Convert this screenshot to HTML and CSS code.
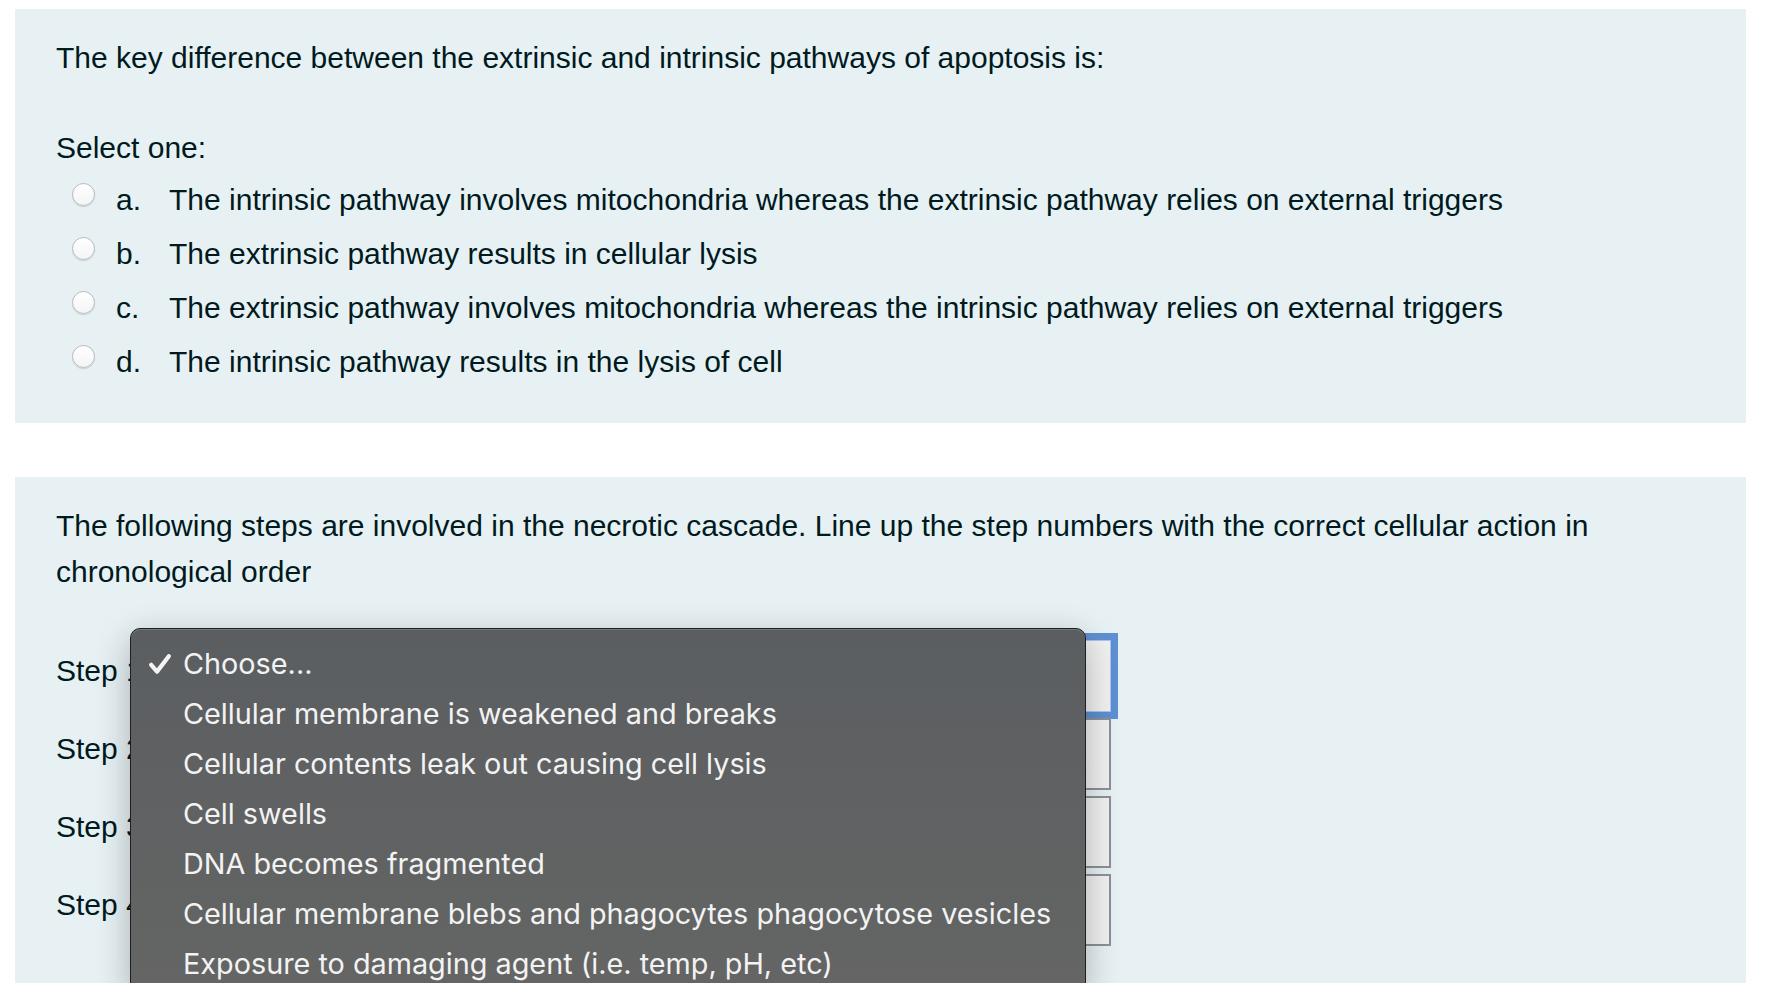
FILE: index.html
```html
<!DOCTYPE html>
<html>
<head>
    <title>Quiz</title>
    <link rel="stylesheet" href="styles.css">
</head>
<body>
    <div class="page">
        <div class="que">
            <div class="qtext">The key difference between the extrinsic and intrinsic pathways of apoptosis is:</div>
            <div class="prompt">Select one:</div>
            <div class="answer">
                <label class="option"><input type="radio" class="radio" name="q1"><span class="num">a.</span><span>The intrinsic pathway involves mitochondria whereas the extrinsic pathway relies on external triggers</span></label>
                <label class="option"><input type="radio" class="radio" name="q1"><span class="num">b.</span><span>The extrinsic pathway results in cellular lysis</span></label>
                <label class="option"><input type="radio" class="radio" name="q1"><span class="num">c.</span><span>The extrinsic pathway involves mitochondria whereas the intrinsic pathway relies on external triggers</span></label>
                <label class="option"><input type="radio" class="radio" name="q1"><span class="num">d.</span><span>The intrinsic pathway results in the lysis of cell</span></label>
            </div>
        </div>

        <div class="que">
            <div class="qtext">The following steps are involved in the necrotic cascade. Line up the step numbers with the correct cellular action in chronological order</div>
            <div class="steps">
                <div class="step-row">
                    <span class="step-label">Step 1</span>
                    <select class="step-select focused"><option>Choose...</option></select>
                </div>
                <div class="step-row">
                    <span class="step-label">Step 2</span>
                    <select class="step-select"><option>Choose...</option></select>
                </div>
                <div class="step-row">
                    <span class="step-label">Step 3</span>
                    <select class="step-select"><option>Choose...</option></select>
                </div>
                <div class="step-row">
                    <span class="step-label">Step 4</span>
                    <select class="step-select"><option>Choose...</option></select>
                </div>

                <ul class="popup-menu">
                    <li class="menu-item">
                        <span class="check-slot">
                            <svg class="check" width="22" height="20" viewBox="0 0 22 20"><path d="M2.2 10.8 L8 17.6 L19.8 2.2" fill="none" stroke="#f4f4f4" stroke-width="4.2" stroke-linecap="round" stroke-linejoin="round"/></svg>
                        </span>Choose...
                    </li>
                    <li class="menu-item"><span class="check-slot"></span>Cellular membrane is weakened and breaks</li>
                    <li class="menu-item"><span class="check-slot"></span>Cellular contents leak out causing cell lysis</li>
                    <li class="menu-item"><span class="check-slot"></span>Cell swells</li>
                    <li class="menu-item"><span class="check-slot"></span>DNA becomes fragmented</li>
                    <li class="menu-item"><span class="check-slot"></span>Cellular membrane blebs and phagocytes phagocytose vesicles</li>
                    <li class="menu-item"><span class="check-slot"></span>Exposure to damaging agent (i.e. temp, pH, etc)</li>
                </ul>
            </div>
        </div>
    </div>
</body>
</html>
```

FILE: styles.css
```css
body {
    margin: 0;
    font-family: "Liberation Sans", Arial, sans-serif;
    color: #001a1e;
    background-color: #fff;
    overflow: hidden;
}

.page {
    padding: 9px 0 0 15px;
    width: 1731px;
}

.que {
    background-color: #e7f1f4;
    padding: 27px 41px 34px;
    font-size: 30px;
    line-height: 42px;
}

.que + .que {
    margin-top: 54px;
    padding-bottom: 37px;
}

.qtext {
    margin-top: -1px;
    line-height: 46px;
}

.prompt {
    margin-top: 46px;
}

.answer {
    margin-top: 4px;
}

.option {
    display: flex;
    align-items: flex-start;
    height: 54px;
    line-height: 54px;
}

.radio {
    appearance: none;
    -webkit-appearance: none;
    flex: none;
    width: 23px;
    height: 23px;
    margin: 10px 0 0 16px;
    border: 1px solid #b7babd;
    border-radius: 50%;
    background: linear-gradient(#ffffff, #f4f4f4);
    box-shadow: 0 1px 1px rgba(0, 0, 0, 0.12);
    box-sizing: border-box;
}

.num {
    width: 53px;
    margin-left: 21px;
    flex: none;
}

.steps {
    position: relative;
    margin-top: 45px;
}

.step-row {
    display: flex;
    align-items: flex-start;
    height: 72px;
    margin-bottom: 6px;
}

.step-row:last-of-type {
    margin-bottom: 0;
}

.step-label {
    padding-top: 10px;
    width: 89px;
    flex: none;
}

.step-select {
    appearance: none;
    -webkit-appearance: none;
    width: 966px;
    height: 72px;
    margin: 0;
    border: 2px solid #8d9096;
    border-radius: 0;
    background: linear-gradient(to right, #f3f3f3, #fdfdfd 40%, #f1f1f1);
    font-family: inherit;
    font-size: 28px;
    color: #001a1e;
    box-sizing: border-box;
}

.step-select.focused {
    border: 1px solid #a8c5ee;
    box-shadow: 0 0 0 7px #5e90d2;
}

.popup-menu {
    position: absolute;
    top: -12px;
    left: 74px;
    width: 956px;
    height: 364px;
    margin: 0;
    padding: 10px 0 0;
    list-style: none;
    box-sizing: border-box;
    border: 1px solid #1e1f20;
    border-radius: 10px;
    background: linear-gradient(#5b5e61, #646564);
    box-shadow: inset 0 1px 0 rgba(255, 255, 255, 0.18), 0 10px 34px rgba(0, 0, 0, 0.28);
    font-family: Inter, "Noto Sans", sans-serif;
    font-size: 28.8px;
    line-height: 50px;
    color: #f3f3f3;
}

.menu-item {
    display: flex;
    align-items: center;
    height: 50px;
}

.check-slot {
    width: 52px;
    flex: none;
    display: flex;
    align-items: center;
    padding-left: 18px;
    box-sizing: border-box;
}

.check {
    display: block;
}
```
